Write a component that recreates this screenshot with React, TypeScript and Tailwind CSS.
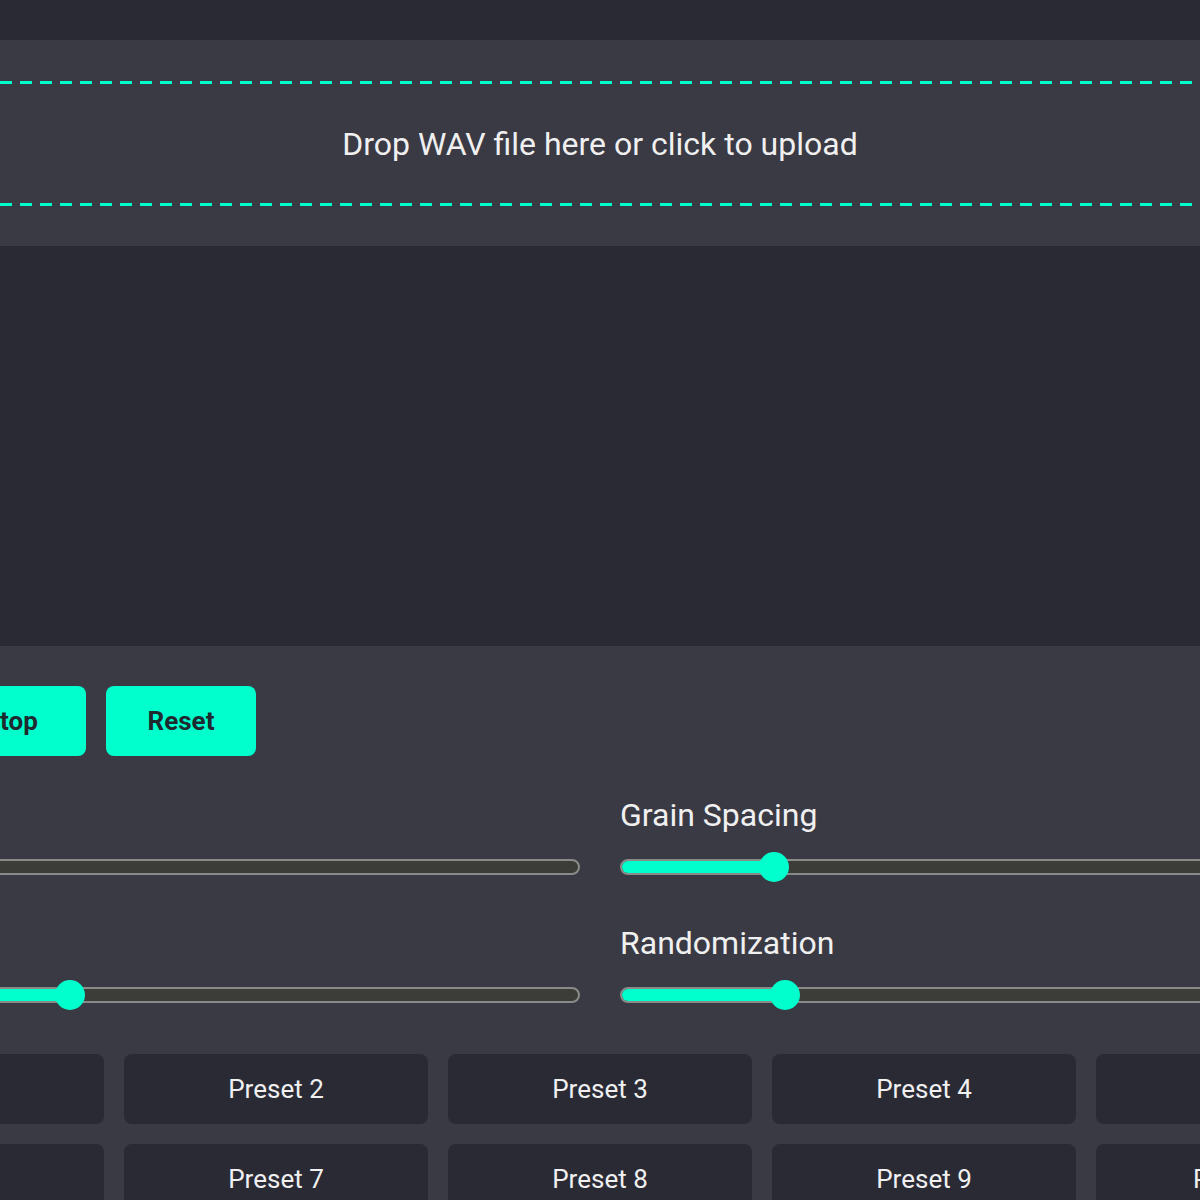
import React from "react";

function Slider({ label, value }: { label: string; value: number }) {
  return (
    <div className="flex flex-col">
      <div className="text-[32px] leading-[38px] text-[#f0f0f0]">{label}</div>
      <div className="relative mt-[18px] h-[30px] flex items-center">
        <div className="relative w-full h-[16px] rounded-full border-2 border-[#8a8a88] bg-[#3c3c38] overflow-hidden">
          <div className="h-full bg-[#00ffcc]" style={{ width: `${value * 100}%` }} />
        </div>
        <div
          className="absolute w-[30px] h-[30px] rounded-full bg-[#00ffcc] top-0"
          style={{ left: `calc(${value * 100}% - 15px)` }}
        />
      </div>
    </div>
  );
}

const dash = "h-[3px] bg-[repeating-linear-gradient(90deg,#00ffcc_0px,#00ffcc_12px,transparent_12px,transparent_20px)]";

export default function App() {
  const presets = Array.from({ length: 10 }, (_, i) => `Preset ${i + 1}`);
  return (
    <div className="w-[1200px] h-[1200px] overflow-hidden bg-[#2a2a35]" style={{ fontFamily: "Roboto, 'Noto Sans', sans-serif" }}>
      <div className="h-[40px] bg-[#2a2a35]" />
      <div className="bg-[#3a3a45] pt-[41px] pb-[40px]">
        <div className="w-[1600px] ml-[-200px] h-[125px] flex flex-col justify-between">
          <div className={dash} />
          <div className="text-center text-[32px] text-[#f0f0f0]">Drop WAV file here or click to upload</div>
          <div className={dash} />
        </div>
      </div>
      <div className="h-[400px] bg-[#2a2a35]" />
      <div className="bg-[#3a3a45] pt-[40px] pb-[40px]">
        <div className="w-[1600px] ml-[-200px]">
          <div className="flex gap-[20px] ml-[-34px]">
            <button className="w-[150px] h-[70px] rounded-[8px] bg-[#00ffcc] text-[26px] font-bold text-[#1f2a30]">Play</button>
            <button className="w-[150px] h-[70px] rounded-[8px] bg-[#00ffcc] text-[26px] font-bold text-[#1f2a30]">Stop</button>
            <button className="w-[150px] h-[70px] rounded-[8px] bg-[#00ffcc] text-[26px] font-bold text-[#1f2a30]">Reset</button>
          </div>
          <div className="grid grid-cols-2 gap-x-[40px] gap-y-[42px] mt-[40px]">
            <Slider label="Grain Size" value={0} />
            <Slider label="Grain Spacing" value={0.197} />
            <Slider label="Pitch" value={0.346} />
            <Slider label="Randomization" value={0.212} />
          </div>
          <div className="grid grid-cols-5 gap-[20px] mt-[44px]">
            {presets.map((p) => (
              <button key={p} className="h-[70px] rounded-[8px] bg-[#2a2a35] text-[26px] text-[#f0f0f0]">
                {p}
              </button>
            ))}
          </div>
        </div>
      </div>
    </div>
  );
}
